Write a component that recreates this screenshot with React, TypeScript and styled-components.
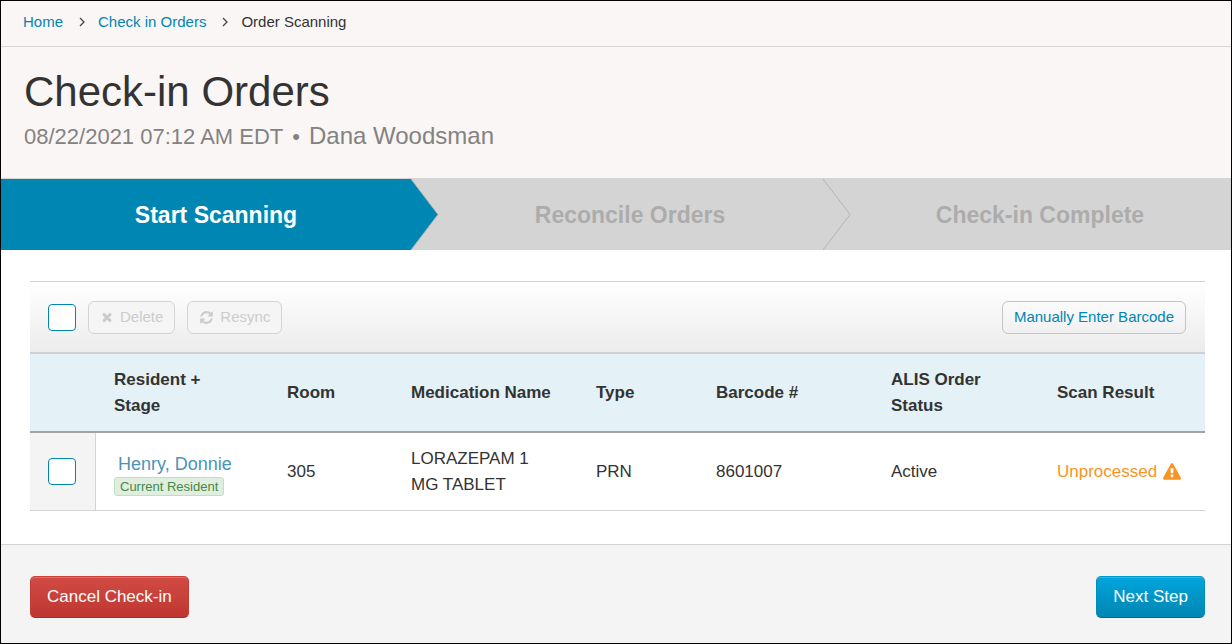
import React from "react";
import styled, { createGlobalStyle } from "styled-components";

const GlobalStyle = createGlobalStyle`
  *, *::before, *::after { box-sizing: border-box; }
  body {
    margin: 0;
    background: #fff;
    color: #333;
    font-family: "Liberation Sans", Arial, Helvetica, sans-serif;
    font-size: 17px;
    line-height: 26px;
  }
`;

const Page = styled.div`
  min-height: 100vh;
  display: flex;
  flex-direction: column;
  border: 1px solid #000;
`;

const Breadcrumbs = styled.nav`
  background: #faf6f5;
  border-bottom: 1px solid #d4d4d4;
  padding: 8px 22px 11px;
  font-size: 15px;

  ol {
    display: flex;
    align-items: center;
    margin: 0;
    padding: 0;
    list-style: none;
  }
  li {
    display: flex;
    align-items: center;
  }
`;

const Link = styled.a`
  color: #0086b3;
  text-decoration: none;
`;

const Chevron = styled.svg`
  width: 6px;
  height: 10px;
  margin: 0 13px 0 16px;
  fill: none;
  stroke: #444;
`;

const PageHeader = styled.header`
  background: #faf6f5;
  border-bottom: 1px solid #d4d4d4;
  padding: 18px 23px 24px;
`;

const Title = styled.h1`
  margin: 0;
  font-size: 42px;
  line-height: 54px;
  font-weight: 400;
`;

const Subtitle = styled.p`
  display: flex;
  align-items: baseline;
  gap: 9px;
  margin: 0;
  color: #848281;
  line-height: 34px;
`;

const DateText = styled.time`
  font-size: 22px;
`;

const Dot = styled.span`
  font-size: 22px;
`;

const UserName = styled.span`
  font-size: 24px;
`;

const Steps = styled.ol`
  display: grid;
  grid-template-columns: 410fr 412fr 408fr;
  margin: 0;
  padding: 0;
  list-style: none;
`;

const Step = styled.li<{ $active?: boolean }>`
  position: relative;
  display: flex;
  align-items: center;
  justify-content: center;
  height: 71px;
  padding-left: 20px;
  background: ${(p) => (p.$active ? "#0086b3" : "#d4d4d4")};
  color: ${(p) => (p.$active ? "#fff" : "#acacac")};
  font-size: 23px;
  font-weight: 700;

  & + & { padding-left: 26px; }
`;

const StepArrow = styled.svg<{ $active?: boolean }>`
  position: absolute;
  z-index: 1;
  top: 0;
  left: 100%;
  width: 28px;
  height: 71px;
  fill: ${(p) => (p.$active ? "#0086b3" : "#d4d4d4")};
  stroke: #b4b4b4;
`;

const Main = styled.main`
  flex: 1;
  padding: 31px 26px 33px 29px;
`;

const Toolbar = styled.div`
  display: flex;
  align-items: center;
  gap: 12px;
  height: 73px;
  padding: 0 19px 0 18px;
  border-top: 1px solid #d4d4d4;
  border-bottom: 2px solid #d0d0d0;
  background: linear-gradient(#fff, #ececec);
`;

const Checkbox = styled.input.attrs({ type: "checkbox" })`
  appearance: none;
  display: block;
  width: 28px;
  height: 27px;
  margin: 0;
  border: 1px solid #0086b3;
  border-radius: 4px;
  background: #fff;

  &:checked { background: #0086b3; }
`;

const ToolButton = styled.button<{ $end?: boolean }>`
  display: flex;
  align-items: center;
  gap: 6px;
  height: 33px;
  margin-left: ${(p) => (p.$end ? "auto" : "0")};
  padding: 0 11px;
  border: 1px solid #c4c4c4;
  border-radius: 6px;
  background: linear-gradient(#fbfbfb, #f0f0f0);
  color: #0086b3;
  font: inherit;
  font-size: 15px;

  &:disabled {
    border-color: #d4d4d4;
    background: #f5f5f5;
    color: #ccc;
  }
`;

const Glyph = styled.svg<{ $size: number }>`
  flex: none;
  width: ${(p) => p.$size}px;
  height: ${(p) => p.$size}px;
  fill: currentColor;
`;

const Table = styled.table`
  width: 100%;
  table-layout: fixed;
  border-collapse: separate;
  border-spacing: 0;
`;

const Col = styled.col<{ $width: number }>`
  width: ${(p) => p.$width}px;
`;

const HeadCell = styled.th`
  height: 79px;
  padding: 0 18px;
  border-bottom: 2px solid #a3a3a3;
  background: #e4f1f6;
  text-align: left;
  vertical-align: middle;
`;

const Cell = styled.td`
  height: 78px;
  padding: 0 18px;
  border-bottom: 1px solid #d4d4d4;
  vertical-align: middle;
`;

const SelectCell = styled(Cell)`
  border-right: 1px solid #d4d4d4;
  background: #f4f4f4;
`;

const Resident = styled.div`
  display: flex;
  flex-direction: column;
  align-items: flex-start;
  padding-top: 3px;
`;

const ResidentLink = styled.a`
  padding-left: 4px;
  color: #4b93ba;
  font-size: 18px;
  text-decoration: none;
`;

const Badge = styled.span`
  padding: 0 5px;
  border: 1px solid #c3dfc3;
  border-radius: 3px;
  background: #dfeedf;
  color: #468847;
  font-size: 13px;
  line-height: 17px;
  white-space: nowrap;
`;

const Result = styled.span`
  display: flex;
  align-items: center;
  gap: 6px;
  color: #f89421;
`;

const Footer = styled.footer`
  display: flex;
  align-items: center;
  justify-content: space-between;
  padding: 31px 26px 25px 29px;
  border-top: 1px solid #d4d4d4;
  background: #f4f4f4;
`;

const ActionButton = styled.button<{ $danger?: boolean }>`
  height: 42px;
  padding: 0 16px;
  border: 1px solid;
  border-color: ${(p) => (p.$danger ? "#cb423b #c23b35 #98302b" : "#0099cb #008dbc #006a8e")};
  border-radius: 5px;
  background: ${(p) =>
    p.$danger ? "linear-gradient(#d14b44, #bd362f)" : "linear-gradient(#00a5dc, #0086b3)"};
  box-shadow: inset 0 1px 0 rgba(255, 255, 255, 0.2);
  color: #fff;
  font: inherit;
`;

const TIMES =
  "M1490 1322q0 40-28 68l-136 136q-28 28-68 28t-68-28l-294-294-294 294q-28 28-68 28t-68-28l-136-136q-28-28-28-68t28-68l294-294-294-294q-28-28-28-68t28-68l136-136q28-28 68-28t68 28l294 294 294-294q28-28 68-28t68 28l136 136q28 28 28 68t-28 68l-294 294 294 294q28 28 28 68z";
const REFRESH =
  "M1639 1056q0 5-1 7-64 268-268 434.5t-478 166.5q-146 0-282.5-55t-243.5-157l-129 129q-19 19-45 19t-45-19-19-45v-448q0-26 19-45t45-19h448q26 0 45 19t19 45-19 45l-137 137q71 66 161 102t187 36q134 0 250-65t186-179q11-17 53-117 8-23 30-23h192q13 0 22.5 9.5t9.5 22.5zm25-800v448q0 26-19 45t-45 19h-448q-26 0-45-19t-19-45 19-45l138-138q-148-137-349-137-134 0-250 65t-186 179q-11 17-53 117-8 23-30 23h-199q-13 0-22.5-9.5t-9.5-22.5v-7q65-268 270-434.5t480-166.5q146 0 284 55.5t245 156.5l130-129q19-19 45-19t45 19 19 45z";
const WARNING =
  "M1024 1375v-190q0-14-9.5-23.5t-22.5-9.5h-192q-13 0-22.5 9.5t-9.5 23.5v190q0 14 9.5 23.5t22.5 9.5h192q13 0 22.5-9.5t9.5-23.5zm-2-374l18-459q0-12-10-19-13-11-24-11h-220q-11 0-24 11-10 7-10 21l17 457q0 10 10 16.5t24 6.5h185q14 0 23.5-6.5t10.5-16.5zm-14-934l768 1408q35 63-2 126-17 29-46.5 46t-63.5 17h-1536q-34 0-63.5-17t-46.5-46q-37-63-2-126l768-1408q17-31 47-49t65-18 65 18 47 49z";

function Icon({ path, size, box = "0 0 1792 1792" }: { path: string; size: number; box?: string }) {
  return (
    <Glyph $size={size} viewBox={box} aria-hidden="true">
      <path d={path} />
    </Glyph>
  );
}

function Separator() {
  return (
    <Chevron viewBox="0 0 6 10" aria-hidden="true">
      <path d="M1 1 5 5 1 9" strokeWidth="1.3" />
    </Chevron>
  );
}

function Arrow({ active }: { active?: boolean }) {
  return (
    <StepArrow $active={active} viewBox="0 0 28 71" aria-hidden="true">
      <path d="M0 0 27 35.5 0 71" />
    </StepArrow>
  );
}

const columns = [
  { label: "Resident + Stage", width: 173 },
  { label: "Room", width: 124 },
  { label: "Medication Name", width: 185 },
  { label: "Type", width: 120 },
  { label: "Barcode #", width: 175 },
  { label: "ALIS Order Status", width: 166 },
  { label: "Scan Result", width: 166 },
];

const orders = [
  {
    resident: "Henry, Donnie",
    stage: "Current Resident",
    room: "305",
    medication: "LORAZEPAM 1 MG TABLET",
    type: "PRN",
    barcode: "8601007",
    status: "Active",
    result: "Unprocessed",
  },
];

export default function App() {
  return (
    <>
      <GlobalStyle />
      <Page>
        <Breadcrumbs aria-label="Breadcrumb">
          <ol>
            <li>
              <Link href="#home">Home</Link>
              <Separator />
            </li>
            <li>
              <Link href="#check-in">Check in Orders</Link>
              <Separator />
            </li>
            <li aria-current="page">Order Scanning</li>
          </ol>
        </Breadcrumbs>
        <PageHeader>
          <Title>Check-in Orders</Title>
          <Subtitle>
            <DateText>08/22/2021 07:12 AM EDT</DateText>
            <Dot>•</Dot>
            <UserName>Dana Woodsman</UserName>
          </Subtitle>
        </PageHeader>
        <Steps>
          <Step $active aria-current="step">
            Start Scanning
            <Arrow active />
          </Step>
          <Step>
            Reconcile Orders
            <Arrow />
          </Step>
          <Step>Check-in Complete</Step>
        </Steps>
        <Main>
          <Toolbar>
            <Checkbox aria-label="Select all orders" />
            <ToolButton disabled>
              <Icon path={TIMES} size={14} />
              Delete
            </ToolButton>
            <ToolButton disabled>
              <Icon path={REFRESH} size={15} />
              Resync
            </ToolButton>
            <ToolButton $end>Manually Enter Barcode</ToolButton>
          </Toolbar>
          <Table>
            <colgroup>
              <Col $width={66} />
              {columns.map((c) => (
                <Col key={c.label} $width={c.width} />
              ))}
            </colgroup>
            <thead>
              <tr>
                <HeadCell aria-label="Select" />
                {columns.map((c) => (
                  <HeadCell key={c.label} scope="col">
                    {c.label}
                  </HeadCell>
                ))}
              </tr>
            </thead>
            <tbody>
              {orders.map((o) => (
                <tr key={o.barcode}>
                  <SelectCell>
                    <Checkbox aria-label={`Select order for ${o.resident}`} />
                  </SelectCell>
                  <Cell>
                    <Resident>
                      <ResidentLink href="#resident">{o.resident}</ResidentLink>
                      <Badge>{o.stage}</Badge>
                    </Resident>
                  </Cell>
                  <Cell>{o.room}</Cell>
                  <Cell>{o.medication}</Cell>
                  <Cell>{o.type}</Cell>
                  <Cell>{o.barcode}</Cell>
                  <Cell>{o.status}</Cell>
                  <Cell>
                    <Result>
                      {o.result}
                      <Icon path={WARNING} size={18} />
                    </Result>
                  </Cell>
                </tr>
              ))}
            </tbody>
          </Table>
        </Main>
        <Footer>
          <ActionButton $danger>Cancel Check-in</ActionButton>
          <ActionButton>Next Step</ActionButton>
        </Footer>
      </Page>
    </>
  );
}
